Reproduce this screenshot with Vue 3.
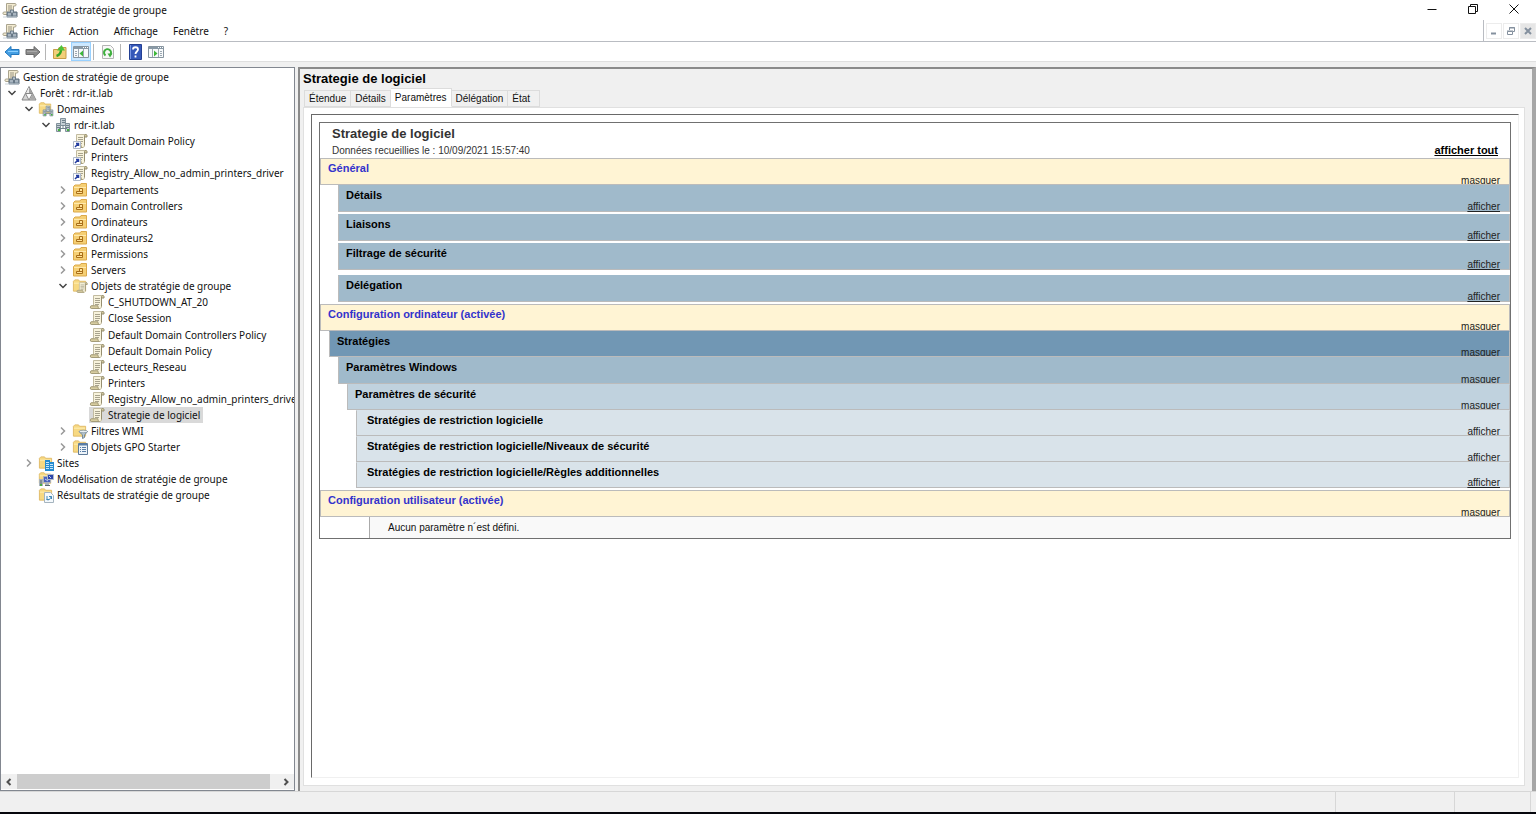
<script setup>
import { ref } from 'vue';

const menus = ['Fichier', 'Action', 'Affichage', 'Fenêtre', '?'];
const tabs = ['Étendue', 'Détails', 'Paramètres', 'Délégation', 'État'];
const activeTab = ref('Paramètres');
const selected = ref('gpo-logiciel');

// open: true = expanded, false = collapsed, undefined = leaf
const tree = [
  [
    { id: 'root', level: 0, icon: 'console', label: 'Gestion de stratégie de groupe' },
    { id: 'forest', level: 1, icon: 'forest', label: 'Forêt : rdr-it.lab', open: true },
    { id: 'domains', level: 2, icon: 'domains', label: 'Domaines', open: true },
    { id: 'domain', level: 3, icon: 'domain', label: 'rdr-it.lab', open: true },
    { id: 'link-default', level: 4, icon: 'link', label: 'Default Domain Policy' },
    { id: 'link-printers', level: 4, icon: 'link', label: 'Printers' },
    { id: 'link-registry', level: 4, icon: 'link', label: 'Registry_Allow_no_admin_printers_driver' }
  ],
  [
    { id: 'ou-dep', level: 4, icon: 'ou', label: 'Departements', open: false },
    { id: 'ou-dc', level: 4, icon: 'ou', label: 'Domain Controllers', open: false },
    { id: 'ou-ord', level: 4, icon: 'ou', label: 'Ordinateurs', open: false },
    { id: 'ou-ord2', level: 4, icon: 'ou', label: 'Ordinateurs2', open: false },
    { id: 'ou-perm', level: 4, icon: 'ou', label: 'Permissions', open: false },
    { id: 'ou-srv', level: 4, icon: 'ou', label: 'Servers', open: false },
    { id: 'gpos', level: 4, icon: 'gpos', label: 'Objets de stratégie de groupe', open: true },
    { id: 'gpo-shutdown', level: 5, icon: 'gpo', label: 'C_SHUTDOWN_AT_20' },
    { id: 'gpo-close', level: 5, icon: 'gpo', label: 'Close Session' }
  ],
  [
    { id: 'gpo-ddcp', level: 5, icon: 'gpo', label: 'Default Domain Controllers Policy' },
    { id: 'gpo-ddp', level: 5, icon: 'gpo', label: 'Default Domain Policy' },
    { id: 'gpo-lecteurs', level: 5, icon: 'gpo', label: 'Lecteurs_Reseau' },
    { id: 'gpo-printers', level: 5, icon: 'gpo', label: 'Printers' },
    { id: 'gpo-registry', level: 5, icon: 'gpo', label: 'Registry_Allow_no_admin_printers_driver' },
    { id: 'gpo-logiciel', level: 5, icon: 'gpo', label: 'Strategie de logiciel' },
    { id: 'wmi', level: 4, icon: 'wmi', label: 'Filtres WMI', open: false },
    { id: 'starter', level: 4, icon: 'starter', label: 'Objets GPO Starter', open: false },
    { id: 'sites', level: 2, icon: 'sites', label: 'Sites', open: false },
    { id: 'modeling', level: 2, icon: 'modeling', label: 'Modélisation de stratégie de groupe' },
    { id: 'results', level: 2, icon: 'results', label: 'Résultats de stratégie de groupe' }
  ]
];

const bands = [
  { kind: 'section', label: 'Général', action: 'masquer' },
  { kind: 'detail', label: 'Détails', action: 'afficher', underline: true, gap: 'gap' },
  { kind: 'detail', label: 'Liaisons', action: 'afficher', underline: true, gap: 'gap' },
  { kind: 'detail', label: 'Filtrage de sécurité', action: 'afficher', underline: true, gap: 'gap-wide' },
  { kind: 'detail', label: 'Délégation', action: 'afficher', underline: true, gap: 'gap' },
  { kind: 'section', label: 'Configuration ordinateur (activée)', action: 'masquer' },
  { kind: 'policies', label: 'Stratégies', action: 'masquer' },
  { kind: 'detail', label: 'Paramètres Windows', action: 'masquer' },
  { kind: 'security', label: 'Paramètres de sécurité', action: 'masquer' },
  { kind: 'leaf', label: 'Stratégies de restriction logicielle', action: 'afficher' },
  { kind: 'leaf', label: 'Stratégies de restriction logicielle/Niveaux de sécurité', action: 'afficher' },
  { kind: 'leaf', label: 'Stratégies de restriction logicielle/Règles additionnelles', action: 'afficher', underline: true, gap: 'gap' },
  { kind: 'section', label: 'Configuration utilisateur (activée)', action: 'masquer' }
];
</script>

<template>
  <div class="window">
    <!-- Icon sprite -->
    <svg class="sprite" aria-hidden="true">
      <symbol id="scroll" viewBox="0 0 16 16">
        <path d="M4.5 1.5H14v2h-1.5v9c0 1.400-.8 2-2 2H2.500c-1.500 0-1.500-2.700 0-2.700h2z" fill="#f8f3dc" stroke="#c2bba0" />
        <path d="M12.500 12.500V2.500c0-1.300 2.500-1.300 2.500 0V4h-2" fill="#d8cda0" stroke="#968e70" />
        <path d="M2.500 11.800H9c0 1.200 0 2.200 1.500 2.700h-8c-1.500 0-1.500-2.700 0-2.700z" fill="#d8cda0" stroke="#a49c79" />
        <path d="M6 4.500h5M6 6.500h5M6 8.500h5M6 10.500h4" stroke="#a8a38e" />
      </symbol>
      <symbol id="folder" viewBox="0 0 16 16">
        <path d="M1.500 3.500 3 2h4l1 1.500h6.500V14h-13z" fill="#f7d982" stroke="#dfba66" />
        <path d="M2 5.500h12" stroke="#fff0b8" />
      </symbol>
      <symbol id="console" viewBox="0 0 16 16">
        <path d="M4.500 1.500H13c1.500 0 1.500 2.500 0 2.500h-1.500v8.500H2c-1.500 0-1.500-2.500 0-2.500h2.500z" fill="#f2ead0" stroke="#aaa48e" />
        <path d="M6 4h4M6 6h4M6 8h4" stroke="#9b9684" />
        <path d="M5 10h5v5H5zM10 10h5v5h-5z" fill="#8b9aa8" stroke="#5d6d7b" />
        <path d="M8.500 8h3v3h-3z" fill="#b8c5cf" stroke="#6e7d8a" />
        <path d="M6 12h3M11 12h3M1 15h14" stroke="#c8d2d9" />
      </symbol>
      <symbol id="forest" viewBox="0 0 16 16">
        <path d="M8 1.500 15 15H1z" fill="#d4d4d4" stroke="#858585" />
        <path d="m8 2 3.200 6H8z" fill="#a2a2a2" />
        <path d="M8 2 5 8.500h3z" fill="#ececec" />
        <path d="M4.500 8.500h7L8 15z" fill="#fafafa" stroke="#888" />
        <path d="m11.500 9 3 5.500H9z" fill="#aaa" />
      </symbol>
      <symbol id="servers" viewBox="0 0 16 16">
        <path d="M5.500 1.500h5v7h-5zM1.500 6.500h4v8h-4zM10.500 6.500h4v8h-4z" fill="#c5cfd5" stroke="#82919b" />
        <path d="M7 3.500h3M7 5.500h3M2 8.500h3M2 10.500h3M11 8.500h3M11 10.500h3M8 8v3M4 11.500h8" stroke="#71828d" />
        <path d="M3 12h2v2H3zM12 12h2v2h-2z" fill="#43b13e" />
      </symbol>
      <symbol id="domains" viewBox="0 0 16 16">
        <use href="#folder" width="14" height="14" />
        <use href="#servers" x="4" y="4" width="12" height="12" />
      </symbol>
      <symbol id="domain" viewBox="0 0 16 16"><use href="#servers" width="16" height="16" /></symbol>
      <symbol id="link" viewBox="0 0 16 16">
        <use href="#scroll" width="16" height="16" />
        <path d="M1.500 8.500h7v7h-7z" fill="#fff" stroke="#aeb8c8" />
        <path d="m3 14 3-3M4 10.500h2.500V13" stroke="#243da0" stroke-width="1.500" fill="none" />
      </symbol>
      <symbol id="ou" viewBox="0 0 16 16">
        <path d="M1.500 4.500 3 3h5l1-1.500h5.500V14h-13z" fill="#f5cf74" stroke="#dba94a" />
        <path d="M2 5.500h12" stroke="#ffe9ac" />
        <path d="M7.500 6.500h3v5h-6v-2h3z" fill="#ffe296" stroke="#a96e18" />
        <path d="M6 9.500h4" stroke="#a96e18" />
      </symbol>
      <symbol id="gpo" viewBox="0 0 16 16"><use href="#scroll" width="16" height="16" /></symbol>
      <symbol id="gpos" viewBox="0 0 16 16">
        <use href="#folder" width="15" height="15" />
        <use href="#scroll" x="4" y="3" width="12" height="13" />
      </symbol>
      <symbol id="wmi" viewBox="0 0 16 16">
        <use href="#folder" width="15" height="15" />
        <path d="M7 8.500h8.500L12.500 12v2.500l-2 1V12z" fill="#b9c8d2" stroke="#768a99" />
        <ellipse cx="11.300" cy="8.500" rx="4.200" ry="1.300" fill="#e8eff3" stroke="#728795" stroke-width=".7" />
      </symbol>
      <symbol id="starter" viewBox="0 0 16 16">
        <use href="#folder" width="15" height="15" />
        <path d="M6.500 4.500h9v11h-9z" fill="#edf3f8" stroke="#5f7b99" />
        <path d="M7 5.500h8" stroke="#587da6" stroke-width="2" />
        <path d="M8 8.500h1m1 0h4m-6 2h1m1 0h4m-6 2h1m1 0h4" stroke="#587da6" />
      </symbol>
      <symbol id="sites" viewBox="0 0 16 16">
        <use href="#folder" width="15" height="15" />
        <path d="M7 5h5v2h4v9H7z" fill="#258bd0" />
        <path d="M8 7.500h3M8 9.500h3m1 0h3m-7 2h3m1 0h3m-7 2h3m1 0h3" stroke="#c5e6fb" />
      </symbol>
      <symbol id="modeling" viewBox="0 0 16 16">
        <use href="#folder" width="14" height="14" />
        <path d="M5.500 5.500h7v6h-7z" fill="#4a62bd" stroke="#aab1bd" />
        <path d="M9.500 3.500h6v5h-6z" fill="#2c45aa" stroke="#b2bac8" />
        <path d="M1 8h4v7H1zM7 12h4v2H7z" fill="#a9b3bb" />
        <path d="M2 10h2M2 12h2M7 14.500h5" stroke="#5c6872" />
        <path d="m7 8 3 2M11 5l2 2" stroke="#bfcafa" />
        <path d="M2 13h2v2H2z" fill="#49ad43" />
      </symbol>
      <symbol id="results" viewBox="0 0 16 16">
        <use href="#folder" width="15" height="15" />
        <path d="M6.500 5.500h6l3 3v7h-9z" fill="#f5f9fc" stroke="#a5b4bf" />
        <path d="M8.500 12.500h3l2-3M11 9.500h2.500V12M9 9v3.500l1 1" stroke="#3f87b7" fill="none" />
      </symbol>
      <symbol id="pane" viewBox="0 0 16 16">
        <path d="M.5 2.500h15v11H.5z" fill="#f8fafb" stroke="#8795a0" />
        <path d="M1 4h14" stroke="#8999a6" stroke-width="2" />
        <path d="M10 3.500h1m1 0h1m1 0h1" stroke="#fff" />
      </symbol>
    </svg>

    <header class="titlebar">
      <svg class="icon"><use href="#console" /></svg>
      <span class="title">Gestion de stratégie de groupe</span>
      <div class="window-buttons">
        <button aria-label="Réduire"><svg viewBox="0 0 12 12"><path d="M1.500 6.500h9" /></svg></button>
        <button aria-label="Restaurer"><svg viewBox="0 0 12 12"><path d="M1.500 3.500h7v7h-7zM3.500 3.500v-2h7v7h-2" /></svg></button>
        <button aria-label="Fermer"><svg viewBox="0 0 12 12"><path d="m1.500 1.500 9 9m0-9-9 9" /></svg></button>
      </div>
    </header>

    <nav class="menubar">
      <svg class="icon"><use href="#console" /></svg>
      <button v-for="m in menus" :key="m" class="menu">{{ m }}</button>
      <div class="child-buttons">
        <button aria-label="Réduire la fenêtre"><svg viewBox="0 0 10 10"><path d="M2 7.500h5" stroke-width="2" /></svg></button>
        <button aria-label="Restaurer la fenêtre"><svg viewBox="0 0 10 10"><path d="M1.500 5.500h5v3h-5zM3.500 4V1.500h5v4H7M1 5h6M3 2h6" /></svg></button>
        <button aria-label="Fermer la fenêtre" class="off"><svg viewBox="0 0 10 10"><path d="m2 2 6 6m0-6L2 8" stroke-width="2" /></svg></button>
      </div>
    </nav>

    <div class="toolbar">
      <button aria-label="Précédent">
        <svg viewBox="0 0 16 16"><path d="m1 8 6-5.500v3h8v5H7v3z" fill="#459fe3" stroke="#2277bd" /><path d="M4 7.500h10" stroke="#8bd0ff" /></svg>
      </button>
      <button aria-label="Suivant">
        <svg viewBox="0 0 16 16"><path d="M15 8 9 2.500v3H1v5h8v3z" fill="#8b8b8b" stroke="#6b6b6b" /><path d="M2 7.500h10" stroke="#aaa" /></svg>
      </button>
      <span class="sep"></span>
      <button aria-label="Niveau supérieur">
        <svg viewBox="0 0 16 16"><path d="M1.500 5.500H6l1-2h7v11H1.500z" fill="#f3cf79" stroke="#c79d48" /><path d="M4.500 12C8 11 9 8 9 5.500" stroke="#34a626" stroke-width="2.400" fill="none" /><path d="M5 6.500 9.500 1 13 6.500z" fill="#4fc238" /></svg>
      </button>
      <button aria-label="Arborescence" class="on">
        <svg viewBox="0 0 16 16"><use href="#pane" width="16" height="16" /><path d="M5.500 5v8M10.500 5v8M2 7.500h2m-2 2h2m-2 2h2" stroke="#9ba7b1" /><path d="M10 6.500v6L6.500 9.500z" fill="#3db73a" /></svg>
      </button>
      <span class="sep"></span>
      <button aria-label="Actualiser">
        <svg viewBox="0 0 16 16"><path d="M2.500 1.500h8l3 3v10h-11z" fill="#f8f8f8" stroke="#b4b4b4" /><path d="M5.500 11.500a3.500 3.500 0 1 1 5-1" stroke="#3faf3e" stroke-width="2" fill="none" /><path d="M7.500 9.500h5l-2.500 4z" fill="#3faf3e" /></svg>
      </button>
      <span class="sep"></span>
      <button aria-label="Aide">
        <svg viewBox="0 0 16 16"><path d="M2.500.5h12v15h-12z" fill="#3558b9" stroke="#233f93" /><path d="M3.500 1v14" stroke="#7896e3" /><path d="M6 5.500C6 2.500 11 2.500 11 5.500 11 7.500 8.500 7.500 8.500 10M8.500 11.500v2" stroke="#fff" stroke-width="1.800" fill="none" /></svg>
      </button>
      <button aria-label="Volet Actions">
        <svg viewBox="0 0 16 16"><use href="#pane" width="16" height="16" /><path d="M4.500 5v8M10.500 5v8M12 7.500h2m-2 2h2m-2 2h2" stroke="#9ba7b1" /><path d="M6 6.500v6l3.500-3z" fill="#3db73a" /></svg>
      </button>
    </div>

    <main class="content">
      <aside class="tree">
        <div class="tree-body">
          <ul v-for="(group, i) in tree" :key="i" class="tree-group">
            <li v-for="n in group" :key="n.id" class="node" :style="{ paddingLeft: n.level * 17 + 3 + 'px' }">
              <button v-if="n.open !== undefined" class="toggle" :class="{ open: n.open }" :aria-label="n.label">
                <svg viewBox="0 0 10 10"><path :d="n.open ? 'm1.500 3 3.500 3.500L8.500 3' : 'm3 1.500 3.500 3.500L3 8.500'" /></svg>
              </button>
              <span class="node-item" :class="{ selected: selected === n.id }" @click="selected = n.id">
                <svg class="icon"><use :href="'#' + n.icon" /></svg>
                <span class="node-label">{{ n.label }}</span>
              </span>
            </li>
          </ul>
        </div>
        <div class="scrollbar">
          <button aria-label="Défiler à gauche"><svg viewBox="0 0 10 10"><path d="M6.500 2 3.500 5l3 3" /></svg></button>
          <div class="scroll-track"><div class="scroll-thumb"></div></div>
          <button aria-label="Défiler à droite"><svg viewBox="0 0 10 10"><path d="m3.500 2 3 3-3 3" /></svg></button>
        </div>
      </aside>

      <section class="details">
        <h1>Strategie de logiciel</h1>
        <div class="tabs">
          <button v-for="t in tabs" :key="t" class="tab" :class="{ active: t === activeTab }" @click="activeTab = t">{{ t }}</button>
        </div>
        <div class="tab-page">
          <div class="viewer">
            <article class="report">
              <div class="report-head">
                <div>
                  <h2>Strategie de logiciel</h2>
                  <p>Données recueillies le : 10/09/2021 15:57:40</p>
                </div>
                <a href="#" class="show-all">afficher tout</a>
              </div>
              <div v-for="b in bands" :key="b.label" class="band" :class="[b.kind, b.gap, { underlined: b.underline }]">
                <span>{{ b.label }}</span>
                <a href="#">{{ b.action }}</a>
              </div>
              <div class="empty-row"><p>Aucun paramètre n´est défini.</p></div>
            </article>
          </div>
        </div>
      </section>
    </main>

    <footer class="statusbar">
      <span class="cell main"></span>
      <span class="cell"></span>
      <span class="cell narrow"></span>
    </footer>
  </div>
</template>

<style>
body {
  margin: 0;
}
</style>

<style scoped>
.window {
  height: 100vh;
  box-sizing: border-box;
  display: flex;
  flex-direction: column;
  background: #f0f0f0;
  border-bottom: 2px solid #05060c;
  font-family: "Noto Sans", "Open Sans", sans-serif;
  font-size: 10px;
  color: #111;
  overflow: hidden;
}

.sprite {
  position: absolute;
  width: 0;
  height: 0;
}

button {
  border: 0;
  padding: 0;
  margin: 0;
  background: none;
  font: inherit;
  color: inherit;
  display: flex;
  align-items: center;
  justify-content: center;
}

h1, h2, p, ul {
  margin: 0;
  padding: 0;
}

.icon {
  width: 16px;
  height: 16px;
  flex: none;
}

/* Title and menu */
.titlebar {
  height: 20px;
  flex: none;
  display: flex;
  align-items: center;
  padding-left: 2px;
  gap: 3px;
  background: #fff;
}

.window-buttons {
  margin-left: auto;
  align-self: flex-start;
  display: flex;
  padding-right: 2px;
}

.window-buttons button {
  width: 41px;
  height: 18px;
}

.window-buttons svg {
  width: 12px;
  height: 12px;
  fill: none;
  stroke: #111;
}

.menubar {
  height: 21px;
  flex: none;
  display: flex;
  align-items: center;
  padding-left: 2px;
  background: #fff;
  border-bottom: 1px solid #b9bcc2;
}

.menu {
  margin-left: 5px;
  margin-right: 10px;
}

.child-buttons {
  margin-left: auto;
  align-self: stretch;
  display: flex;
  align-items: center;
  gap: 1px;
  padding-left: 2px;
  border-left: 1px solid #b9bcc2;
}

.child-buttons button {
  width: 16px;
  height: 16px;
  box-sizing: border-box;
  border: 1px solid #ececec;
}

.child-buttons .off {
  background: #e6e6e6;
}

.child-buttons svg {
  width: 10px;
  height: 10px;
  fill: none;
  stroke: #84909e;
}

.toolbar {
  height: 19px;
  flex: none;
  display: flex;
  align-items: center;
  padding-left: 2px;
  background: #fff;
  border-bottom: 1px solid #dfdfdf;
}

.toolbar button {
  width: 20px;
  height: 19px;
  box-sizing: border-box;
}

.toolbar button + button {
  margin-left: 1px;
}

.toolbar .on {
  background: #cce8ff;
  border: 1px solid #99d1ff;
}

.toolbar svg {
  width: 16px;
  height: 16px;
}

.sep {
  width: 1px;
  height: 16px;
  margin: 0 4px 0 2px;
  background: #b5b5b5;
}

/* Tree */
.content {
  flex: 1;
  min-height: 0;
  display: flex;
  gap: 3px;
  padding-top: 5px;
}

.tree {
  width: 295px;
  flex: none;
  box-sizing: border-box;
  display: flex;
  flex-direction: column;
  background: #fff;
  border: 1px solid #828790;
}

.tree-body {
  flex: 1;
  min-height: 0;
  overflow: hidden;
  padding-top: 1px;
}

.tree-group {
  list-style: none;
}

.tree-group + .tree-group {
  margin-top: 1px;
}

.node {
  height: 16px;
  display: flex;
  align-items: center;
}

.toggle {
  width: 18px;
  height: 16px;
  margin-left: -18px;
  flex: none;
}

.toggle svg {
  width: 10px;
  height: 10px;
  fill: none;
  stroke: #999;
  stroke-width: 1.5;
}

.toggle.open svg {
  stroke: #444;
}

.node-item {
  display: flex;
  align-items: center;
  gap: 3px;
  height: 16px;
  padding-right: 3px;
  white-space: nowrap;
}

.node-item.selected {
  background: #d9d9d9;
}

.scrollbar {
  height: 15px;
  flex: none;
  display: flex;
  margin-bottom: 1px;
  background: #f0f0f0;
}

.scrollbar button {
  width: 16px;
}

.scrollbar svg {
  width: 10px;
  height: 10px;
  fill: none;
  stroke: #505050;
  stroke-width: 2;
}

.scroll-track {
  flex: 1;
}

.scroll-thumb {
  width: 97%;
  height: 100%;
  background: #cdcdcd;
}

/* Details pane */
.details {
  flex: 1;
  min-width: 0;
  display: flex;
  flex-direction: column;
  padding: 2px 7px 5px 3px;
  border-left: 2px solid #8a8a8a;
  border-top: 2px solid #8a8a8a;
  border-right: 4px solid #a6a6a6;
  font-family: "Liberation Sans", Arial, sans-serif;
}

h1 {
  font-size: 13px;
  line-height: 16px;
  font-weight: bold;
  color: #000;
}

.tabs {
  display: flex;
  align-items: flex-end;
  height: 20px;
  padding-left: 1px;
}

.tab {
  height: 17px;
  padding: 0 4px;
  border: 1px solid #dcdcdc;
  border-left-width: 0;
}

.tab:first-child {
  border-left-width: 1px;
}

.tab:last-child {
  padding-right: 9px;
}

.tab.active {
  height: 19px;
  background: #fff;
  border-bottom-color: #fff;
}

.tab-page {
  flex: 1;
  min-height: 0;
  display: flex;
  padding: 6px 5px 7px 7px;
  background: #fff;
  border: 1px solid #e0e0e0;
}

.viewer {
  flex: 1;
  min-width: 0;
  padding: 7px 7px 0;
  border: 1px solid #f0f0f0;
  border-left: 1px solid #696969;
  border-top: 1px solid #696969;
}

.report {
  border: 1px solid #707070;
}

.report-head {
  height: 35px;
  box-sizing: border-box;
  display: flex;
  justify-content: space-between;
  align-items: flex-start;
  padding: 2px 12px 0;
}

h2 {
  font-size: 13px;
  line-height: 17px;
  color: #333;
}

.report-head p {
  line-height: 17px;
  color: #333;
}

.show-all {
  align-self: flex-end;
  font-size: 11px;
  line-height: 16px;
  font-weight: bold;
  color: #000;
}

.band {
  height: 27px;
  box-sizing: border-box;
  display: flex;
  justify-content: space-between;
  padding: 0 9px 0 7px;
  border: 1px solid #bbb;
  border-top-color: transparent;
  overflow: hidden;
  color: #000;
}

.band span {
  font-size: 11px;
  line-height: 18px;
  font-weight: bold;
}

.band a {
  align-self: flex-end;
  line-height: 12px;
  margin-bottom: -3px;
  color: #222;
  text-decoration: none;
}

/* the link's underline falls on the band's bottom border */
.band.underlined {
  overflow: visible;
}

.band.underlined a {
  margin-bottom: -2px;
  text-decoration: underline;
}

.section {
  background: #fff4d4;
  border-top-color: #bbb;
}

.section span {
  color: #3333cc;
}

.policies {
  height: 26px;
  margin-left: 9px;
  background: #7197b4;
}

.detail {
  margin-left: 18px;
  background: #a0bacb;
}

.security {
  height: 26px;
  margin-left: 27px;
  background: #c0d2de;
}

.leaf {
  height: 26px;
  margin-left: 36px;
  padding-left: 10px;
  background: #d9e3ea;
}

.gap {
  margin-bottom: 2px;
}

.gap-wide {
  margin-bottom: 5px;
}

.empty-row {
  padding-left: 49px;
}

.empty-row p {
  padding-left: 18px;
  line-height: 21px;
  background: #f9f9f9;
  border-left: 1px solid #aaa;
}

/* Status bar */
.statusbar {
  height: 20px;
  flex: none;
  display: flex;
  border-top: 1px solid #d7d7d7;
  padding-right: 5px;
}

.cell {
  width: 118px;
  border-right: 1px solid #d7d7d7;
}

.cell.main {
  flex: 1;
}

.cell.narrow {
  width: 75px;
}
</style>
